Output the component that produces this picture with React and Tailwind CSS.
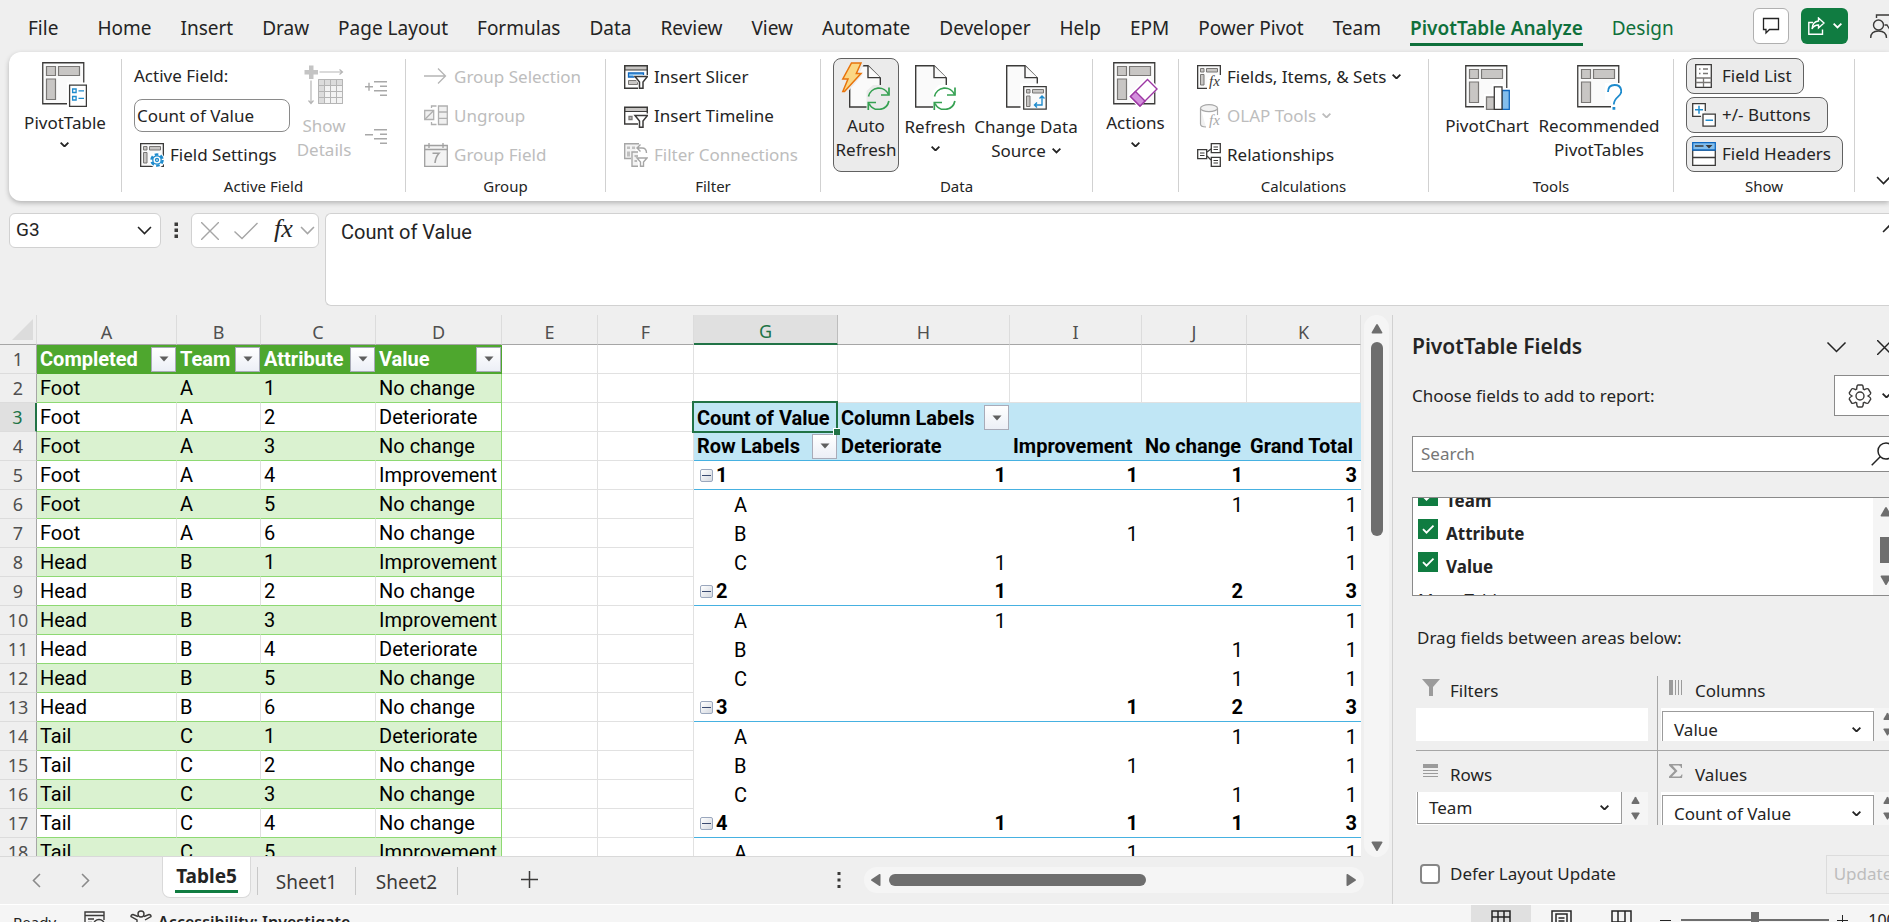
import { useState } from 'react';

const tabs = [
  'File', 'Home', 'Insert', 'Draw', 'Page Layout', 'Formulas', 'Data', 'Review', 'View', 'Automate',
  'Developer', 'Help', 'EPM', 'Power Pivot', 'Team', 'PivotTable Analyze', 'Design',
];

const columns = [
  { name: 'A', width: 140 },
  { name: 'B', width: 84 },
  { name: 'C', width: 115 },
  { name: 'D', width: 126 },
  { name: 'E', width: 96 },
  { name: 'F', width: 96 },
  { name: 'G', width: 144 },
  { name: 'H', width: 172 },
  { name: 'I', width: 132 },
  { name: 'J', width: 105 },
  { name: 'K', width: 114 },
];

const records = [
  ['Foot', 'A', '1', 'No change'],
  ['Foot', 'A', '2', 'Deteriorate'],
  ['Foot', 'A', '3', 'No change'],
  ['Foot', 'A', '4', 'Improvement'],
  ['Foot', 'A', '5', 'No change'],
  ['Foot', 'A', '6', 'No change'],
  ['Head', 'B', '1', 'Improvement'],
  ['Head', 'B', '2', 'No change'],
  ['Head', 'B', '3', 'Improvement'],
  ['Head', 'B', '4', 'Deteriorate'],
  ['Head', 'B', '5', 'No change'],
  ['Head', 'B', '6', 'No change'],
  ['Tail', 'C', '1', 'Deteriorate'],
  ['Tail', 'C', '2', 'No change'],
  ['Tail', 'C', '3', 'No change'],
  ['Tail', 'C', '4', 'No change'],
  ['Tail', 'C', '5', 'Improvement'],
];

// Pivot body, starting on sheet row 5
const pivotRows = [
  ['1', '1', '1', '1', '3'],
  ['A', '', '', '1', '1'],
  ['B', '', '1', '', '1'],
  ['C', '1', '', '', '1'],
  ['2', '1', '', '2', '3'],
  ['A', '1', '', '', '1'],
  ['B', '', '', '1', '1'],
  ['C', '', '', '1', '1'],
  ['3', '', '1', '2', '3'],
  ['A', '', '', '1', '1'],
  ['B', '', '1', '', '1'],
  ['C', '', '', '1', '1'],
  ['4', '1', '1', '1', '3'],
  ['A', '', '1', '', '1'],
];

const Chevron = ({ size = 9, stroke = 1.8, className = '' }) => (
  <svg width={size} height={size * 0.6} viewBox="0 0 10 6" className={className} fill="none" stroke="currentColor" strokeWidth={(stroke * 10) / size}>
    <path d="M.7 .7 5 5 9.3 .7" />
  </svg>
);

const Triangle = ({ dir = 'up', className = '' }) => {
  const paths = {
    up: 'M5.2 1.5Q6 .5 6.8 1.5L11.4 9.4Q11.6 10.5 10.5 10.5H1.5Q.4 10.5 .6 9.4Z',
    down: 'M5.2 9.5Q6 10.5 6.8 9.5L11.4 1.6Q11.6 .5 10.5 .5H1.5Q.4 .5 .6 1.6Z',
    left: 'M1.5 5.2Q.5 6 1.5 6.8L9.4 12Q10.5 12.2 10.5 11V1Q10.5 -.2 9.4 0Z',
    right: 'M9.5 5.2Q10.5 6 9.5 6.8L1.6 12Q.5 12.2 .5 11V1Q.5 -.2 1.6 0Z',
  };
  return (
    <svg width="12" height="12" viewBox="0 0 12 12" className={className} fill="#6e6e6e">
      <path d={paths[dir]} />
    </svg>
  );
};

/* Ribbon icons */

const PivotBase = () => (
  <g>
    <path d="M.75 .75h41v41h-41z" fill="#fafafa" stroke="#3b3a39" strokeWidth="1.3" />
    <path d="M4.5 4.5h9v9h-9zM16.5 4.5h21v9h-21zM4.5 17h9v20.5h-9z" fill="#c8c6c4" stroke="#797775" strokeWidth="1.2" />
  </g>
);

const PivotTableIcon = () => (
  <svg width="45" height="45" viewBox="0 0 45 45" fill="none">
    <PivotBase />
    <path d="M25 20.5h20V45H25z" fill="#fff" />
    <path d="M27.6 23.1h16.8v21.3H27.6z" fill="#fff" stroke="#3b3a39" strokeWidth="1.3" />
    <path d="M30.6 27h3.5v3.5h-3.5zM30.6 34.5h3.5V38h-3.5zM36.5 28.8H42M36.5 36.3H42" stroke="#1e8bcd" strokeWidth="1.3" />
  </svg>
);

const ActionsIcon = () => (
  <svg width="45" height="45" viewBox="0 0 45 45" fill="none">
    <PivotBase />
    <path d="M14.5 34 34.5 14 46 26 26 46z" fill="#fff" />
    <path d="M17.5 34.5 34.5 17.5 44 27 27 44z" fill="#fff" stroke="#9c36a3" strokeWidth="1.4" />
    <path d="M17.5 34.5 22.5 29.5 32 39 27 44z" fill="#d38fdc" stroke="#9c36a3" strokeWidth="1.4" />
  </svg>
);

const PivotChartIcon = () => (
  <svg width="45" height="45" viewBox="0 0 45 45" fill="none">
    <PivotBase />
    <path d="M19 29h8V19h12v4h6v22H19z" fill="#fff" />
    <path d="M21.5 32h8v12.3h-8z" fill="#c8c6c4" stroke="#797775" strokeWidth="1.3" />
    <path d="M37 25.5h7.3v18.8H37z" fill="#83beec" stroke="#1068bf" strokeWidth="1.3" />
    <path d="M29.3 21.8H37v22.5h-7.7z" fill="#fff" stroke="#3b3a39" strokeWidth="1.3" />
  </svg>
);

const RecommendedIcon = () => (
  <svg width="45" height="45" viewBox="0 0 45 45" fill="none">
    <PivotBase />
    <path d="M28 18h17v27H34V35h-6z" fill="#fff" />
    <path d="M31 27Q31 20 37.6 20T44.3 26.5C44.3 31.5 36.8 32 36.8 39.5" stroke="#1e8bcd" strokeWidth="1.8" />
    <path d="M35.5 42h2.8v2.8h-2.8z" fill="#1e8bcd" />
  </svg>
);

const DocShape = () => (
  <g stroke="#3b3a39" strokeWidth="1.4" fill="#fafafa">
    <path d="M.7 .7H19L31.3 13V42H.7z" />
    <path d="M19 .7V12.6H31.3" />
  </g>
);

const RefreshArrows = () => (
  <g stroke="#36a152" strokeWidth="1.7">
    <path d="M19.5 31.5A10.6 10.6 0 0 1 39.6 29.6M39.9 36A10.6 10.6 0 0 1 20 38.5" />
    <path d="M40 22.5V30H32M19.3 45V37.5H27" />
  </g>
);

const RefreshIcon = () => (
  <svg width="41" height="45" viewBox="0 0 41 45" fill="none">
    <DocShape />
    <path d="M18 45V26L24 20H41V45z" fill="#fff" />
    <RefreshArrows />
  </svg>
);

const AutoRefreshIcon = () => (
  <svg width="50" height="48" viewBox="0 0 50 48" fill="none">
    <g transform="translate(8 3)">
      <DocShape />
      <path d="M17.5 45V26L24 20H42V45z" fill="#ebebeb" />
      <RefreshArrows />
    </g>
    <path d="M7 0H24L18 12H22L4 33H0V18z" fill="#ebebeb" />
    <path d="M10.5 1H20L15.3 11.5H20L3.5 29.5H1.8L7 17H1.8z" fill="#fbd784" stroke="#e8740c" strokeWidth="1.5" />
  </svg>
);

const ChangeSourceIcon = () => (
  <svg width="41" height="45" viewBox="0 0 41 45" fill="none">
    <DocShape />
    <path d="M14.5 18.5H41V45H14.5z" fill="#fff" />
    <path d="M17.7 21.7h22.5v22.5H17.7z" fill="#fafafa" stroke="#3b3a39" strokeWidth="1.3" />
    <path d="M20.5 24.5h3.5v3.5h-3.5zM26.5 24.5h11v3.5h-11zM20.5 31h3.5v10.5h-3.5z" fill="#c8c6c4" stroke="#797775" />
    <path d="M36 31V40H28.5M33.5 33.5 36 31 38.5 33.5M31 37.5 28.5 40 31 42.5" stroke="#1e8bcd" strokeWidth="1.4" />
  </svg>
);

const ShowDetailsIcon = () => (
  <svg width="40" height="40" viewBox="0 0 40 40" fill="none" stroke="#b5b5b5">
    <path d="M5 .5h4.5V5H14v4.5H9.5V14H5V9.5H.5V5H5z" fill="#c4c4c4" stroke="none" />
    <path d="M15.5 7H38M35.5 4.5 38.5 7 35.5 9.5M7 15.5V38M4.5 35.5 7 38.5 9.5 35.5" strokeWidth="1.2" />
    <path d="M14.5 14.5h24v24h-24z" fill="#f3f3f3" />
    <path d="M14.5 14.5h24v6h-24zM14.5 20h6v18.5h-6z" fill="#dcdcdc" stroke="none" />
    <path d="M14.5 14.5h24v24h-24zM20.5 14.5v24M26.5 14.5v24M32.5 14.5v24M14.5 20.5h24M14.5 26.5h24M14.5 32.5h24" />
  </svg>
);

const IndentIcon = ({ minus }) => (
  <svg width="22" height="18" viewBox="0 0 22 18" fill="none" stroke="#a8a8a8" strokeWidth="1.4">
    <path d="M9 1.7H22M15 6.2H22M9 10.7H22M15 15.2H22M0 6.7H8" />
    {!minus && <path d="M4 2.7V10.7" />}
  </svg>
);

const SmallPivot = () => (
  <g>
    <path d="M.65 .65h22.7v22.7H.65z" fill="#fafafa" stroke="#3b3a39" strokeWidth="1.3" />
    <path d="M3.5 3.5h3.5V7H3.5zM9.5 3.5h11V7h-11zM3.5 9.5h3.5v10.5H3.5z" fill="#c8c6c4" stroke="#797775" />
  </g>
);

const FieldSettingsIcon = () => (
  <svg width="24" height="24" viewBox="0 0 24 24" fill="none">
    <SmallPivot />
    <circle cx="17" cy="17" r="7.8" fill="#fff" />
    <circle cx="17" cy="17" r="5.6" stroke="#1e8bcd" strokeWidth="2.4" strokeDasharray="3.6 2.26" />
    <circle cx="17" cy="17" r="4.2" stroke="#1e8bcd" strokeWidth="1.3" fill="#fff" />
    <circle cx="17" cy="17" r="1.5" stroke="#1e8bcd" strokeWidth="1.3" />
  </svg>
);

const FieldsItemsIcon = () => (
  <svg width="24" height="24" viewBox="0 0 24 24" fill="none">
    <SmallPivot />
    <path d="M10 24V14L14 10H24V24z" fill="#fff" />
    <text x="12" y="21" fontFamily="Liberation Serif" fontStyle="italic" fontSize="15" fill="#3b3a39">fx</text>
  </svg>
);

const OlapIcon = () => (
  <svg width="24" height="24" viewBox="0 0 24 24" fill="none" stroke="#a8a8a8" strokeWidth="1.2">
    <path d="M3.500 4V20C3.5 22 6 23 9 23M20.5 4V11" fill="#f2f2f2" />
    <ellipse cx="12" cy="4.2" rx="8.5" ry="3.5" fill="#f2f2f2" />
    <text x="12" y="21" fontFamily="Liberation Serif" fontStyle="italic" fontSize="15" fill="#a8a8a8" stroke="none">fx</text>
  </svg>
);

const RelationshipsIcon = () => (
  <svg width="24" height="24" viewBox="0 0 24 24" fill="none" stroke="#3b3a39" strokeWidth="1.3">
    <path d="M10 9 14 6M10 13 14 17" />
    <path d="M.7 6.7h9v9h-9zM14.3 .7h9v9h-9zM14.3 14.3h9v9h-9z" fill="#fff" />
    <path d="M3 10h4.5M3 12.5h4.5M16.5 4h4.5M16.5 6.5h4.5M16.5 17.5h4.5M16.5 20h4.5" strokeWidth="1" />
  </svg>
);

const ArrowRightIcon = () => (
  <svg width="24" height="24" viewBox="0 0 24 24" fill="none" stroke="#b5b5b5" strokeWidth="1.3">
    <path d="M0 11H21.5M14 3.5 21.5 11 14 18.5" />
  </svg>
);

const UngroupIcon = () => (
  <svg width="24" height="24" viewBox="0 0 24 24" fill="none" stroke="#b0b0b0" strokeWidth="1.3">
    <path d="M.7 6.5h9v9h-9z" fill="#f0f0f0" />
    <path d="M.7 15.5 9.7 6.5M12.5 2H7.5V4M12.5 20.5H7.5V18" />
    <path d="M14.5 2h8.8v18.5h-8.8z" fill="#f0f0f0" />
    <path d="M14.5 8h8.8M14.5 14.3h8.8" />
  </svg>
);

const CalendarIcon = () => (
  <svg width="24" height="24" viewBox="0 0 24 24" fill="none" stroke="#a0a0a0" strokeWidth="1.3">
    <path d="M.7 2.5h22.6v20.8H.7z" fill="#f3f3f3" />
    <path d="M.7 6.5h22.6M5 0V5M19 0V5" />
    <path d="M8.5 10.2H15Q11.5 14 11 20" strokeWidth="1.6" />
  </svg>
);

const Funnel = ({ stroke }) => (
  <path d="M11 11.5H23.5L19 17V23.3H15.5V17z" fill="#fff" stroke={stroke} strokeWidth="1.5" />
);

const SlicerIcon = () => (
  <svg width="24" height="24" viewBox="0 0 24 24" fill="none">
    <path d="M.7 .7h22.6v22.6H.7z" fill="#fff" stroke="#3b3a39" strokeWidth="1.4" />
    <path d="M1 1h22v4H1z" fill="#c8c6c4" stroke="#3b3a39" />
    <path d="M4.5 8h15v4h-15z" fill="#83beec" stroke="#1068bf" strokeWidth="1.3" />
    <path d="M4.5 15.5h9v4h-9z" fill="#c8c6c4" stroke="#797775" />
    <path d="M9 10H24V24H14V18z" fill="#fff" />
    <Funnel stroke="#3b3a39" />
  </svg>
);

const TimelineIcon = () => (
  <svg width="24" height="24" viewBox="0 0 24 24" fill="none">
    <path d="M.7 3.2h22.6V20H.7z" fill="#fff" stroke="#3b3a39" strokeWidth="1.4" />
    <path d="M1 3.5h22v4H1z" fill="#c8c6c4" stroke="#3b3a39" />
    <path d="M5 12.5h3v3H5z" fill="#c8c6c4" stroke="#797775" strokeWidth="1.3" />
    <path d="M9 9.5H24V24H14V17z" fill="#fff" />
    <Funnel stroke="#3b3a39" />
  </svg>
);

const FilterConnectionsIcon = () => (
  <svg width="24" height="24" viewBox="0 0 24 24" fill="none" stroke="#a6a6a6" strokeWidth="1.4">
    <path d="M7 15.5H.7V.7H15" fill="#f3f3f3" />
    <path d="M3 3.5h3v2.5H3zM8 3.5h3v2.5H8zM3 8.5h3v5H3z" fill="#c0c0c0" stroke="none" />
    <path d="M16.5 1.500 13 5 16.5 8.5M13 5H18Q22.500 5 22.5 10" />
    <path d="M14 23.3H8V9h6M10.5 13H14M10.5 18H13" fill="#f3f3f3" />
    <path d="M13 15h10l-3.5 4v4.3h-3V19z" fill="#fff" />
  </svg>
);

const FieldListIcon = () => (
  <svg width="24" height="24" viewBox="0 0 24 24" fill="none" stroke="#3b3a39" strokeWidth="1.3">
    <path d="M3.700 .7h15.6v22.6H3.7z" fill="#fff" />
    <path d="M7 5h1.5M11 5h5M7 9.5h1.5M11 9.5h5M3.7 14h15.6M3.7 18.5h15.6M11.5 14v9" stroke="#797775" />
  </svg>
);

const PlusMinusIcon = () => (
  <svg width="24" height="24" viewBox="0 0 24 24" fill="none" stroke="#3b3a39" strokeWidth="1.3">
    <path d="M9 13.3H.7V.7h12.6V8" fill="#fff" />
    <path d="M11 11.2h12.3v12H11z" fill="#fff" />
    <path d="M3 6.8h8M7 2.8v8M13.5 17.2h7.5" stroke="#1e8bcd" strokeWidth="1.5" />
  </svg>
);

const FieldHeadersIcon = () => (
  <svg width="24" height="24" viewBox="0 0 24 24" fill="none" stroke="#3b3a39" strokeWidth="1.3">
    <path d="M.7 8h22.6v15.3H.7zM.7 15.5h22.6" fill="#fff" />
    <path d="M.7 .7h22.6V8H.7z" fill="#83beec" stroke="#1068bf" />
    <path d="M3 4h8.5" />
    <path d="M13.5 3h7L17 6.5z" fill="#3b3a39" stroke="none" />
  </svg>
);

/* Ribbon building blocks */

const RibbonGroup = ({ label, className, children }) => (
  <>
    <section className={`flex shrink-0 flex-col pt-[5px] ${className}`}>
      <div className="flex h-[117px]">{children}</div>
      {label && <h2 className="h-6 text-center text-[15px] leading-6">{label}</h2>}
    </section>
    <span className="mt-[7px] mb-[9px] w-px shrink-0 bg-[#d1d1d1]" />
  </>
);

const BigButton = ({ icon, lines, chevron, className = '', disabled }) => (
  <button
    type="button"
    disabled={disabled}
    className={`mt-px flex h-[114px] shrink-0 flex-col items-center gap-1 whitespace-nowrap rounded-lg text-[17px] leading-6 disabled:text-[#bdbdbd] ${className}`}
  >
    {icon}
    <span className="flex flex-col items-center">
      {lines.map((line, i) => (
        <span key={line} className="flex items-center gap-1.5">
          {line}
          {chevron === 'inline' && i === lines.length - 1 && <Chevron />}
        </span>
      ))}
      {chevron === 'below' && <Chevron className="mt-[7px]" />}
    </span>
  </button>
);

const SmallButton = ({ icon, text, chevron, disabled }) => (
  <button
    type="button"
    disabled={disabled}
    className="flex h-[39px] items-center gap-1.5 whitespace-nowrap text-[17px] disabled:text-[#bdbdbd]"
  >
    {icon}
    <span>{text}</span>
    {chevron && <Chevron />}
  </button>
);

const ToggleButton = ({ icon, text, className }) => (
  <button
    type="button"
    aria-pressed="true"
    className={`flex h-9 items-center gap-1.5 whitespace-nowrap rounded-lg border border-[#616161] bg-[#ebebeb] pl-[5px] text-[17px] ${className}`}
  >
    {icon}
    {text}
  </button>
);

const TabBar = () => (
  <header className="flex h-[52px] items-start justify-between overflow-hidden pl-7">
    <nav className="flex shrink-0 gap-[29px] pt-[10px]">
      {tabs.map((tab) => {
        const active = tab === 'PivotTable Analyze';
        const green = active || tab === 'Design';
        return (
          <button
            key={tab}
            type="button"
            className={`h-9 whitespace-nowrap border-b-[3px] text-[19px] leading-9 ${active ? 'border-[#0f703b] font-semibold' : 'border-transparent'} ${green ? 'text-[#0f703b]' : ''} ${tab === 'File' ? 'mr-[10px]' : ''}`}
          >
            {tab}
          </button>
        );
      })}
    </nav>
    <div className="-mr-3 flex shrink-0 items-center gap-3 pt-2">
      <button type="button" aria-label="Comments" className="flex size-9 items-center justify-center rounded-md border border-[#b0b0b0] bg-white">
        <svg width="18" height="18" viewBox="0 0 18 18" fill="none" stroke="#242424" strokeWidth="1.3">
          <path d="M1.5 1.5h15v11H7.5L4 16V12.5H1.5z" />
        </svg>
      </button>
      <button type="button" aria-label="Share" className="flex h-9 w-[47px] items-center justify-center gap-2 rounded-md bg-[#107c41] text-white">
        <svg width="17" height="18" viewBox="0 0 17 18" fill="none" stroke="currentColor" strokeWidth="1.4">
          <path d="M5 5.5H.8V17.2H14.5V12.5" />
          <path d="M10.5 1 16 6 10.5 11V8Q6 8 4 12Q4.5 4.5 10.5 4z" />
        </svg>
        <Chevron />
      </button>
      <button type="button" aria-label="Account" className="shrink-0 pl-2.5">
        <svg width="31" height="25" viewBox="0 0 31 25" fill="none" stroke="#3b3a39" strokeWidth="1.4">
          <path d="M6.5 4V1H30V16H24L20 20V16" />
          <circle cx="8.5" cy="11" r="5" />
          <path d="M.7 24Q.7 17 8.5 17T16.5 24M14.5 11H17L19.5 15" />
        </svg>
      </button>
    </div>
  </header>
);

const Ribbon = () => (
  <div className="ml-[9px] flex h-[149px] overflow-hidden rounded-l-xl bg-white shadow-[0_2px_5px_rgba(0,0,0,0.25)]">
    <RibbonGroup className="w-[112px] items-center">
      <BigButton icon={<PivotTableIcon />} lines={['PivotTable']} chevron="below" className="pt-1" />
    </RibbonGroup>
    <RibbonGroup label="Active Field" className="w-[283px]">
      <div className="ml-3 flex w-[156px] flex-col">
        <label htmlFor="activeField" className="h-[39px] text-[17px] leading-[38px]">Active Field:</label>
        <div className="flex h-[39px] items-center">
          <input
            id="activeField"
            defaultValue="Count of Value"
            className="h-[33px] w-full rounded-lg border border-[#8a8a8a] bg-white px-0.5 text-[17px] outline-none"
          />
        </div>
        <div className="pl-1.5">
          <SmallButton icon={<FieldSettingsIcon />} text="Field Settings" />
        </div>
      </div>
      <BigButton disabled icon={<ShowDetailsIcon />} lines={['Show', 'Details']} className="ml-2 w-[52px] gap-[9px] pt-[7px]" />
      <div className="flex flex-col gap-[30px] pt-[23px] pl-[15px]">
        <button type="button" disabled aria-label="Expand Field"><IndentIcon /></button>
        <button type="button" disabled aria-label="Collapse Field"><IndentIcon minus /></button>
      </div>
    </RibbonGroup>
    <RibbonGroup label="Group" className="w-[199px]">
      <div className="pl-[18px]">
        <SmallButton disabled icon={<ArrowRightIcon />} text="Group Selection" />
        <SmallButton disabled icon={<UngroupIcon />} text="Ungroup" />
        <SmallButton disabled icon={<CalendarIcon />} text="Group Field" />
      </div>
    </RibbonGroup>
    <RibbonGroup label="Filter" className="w-[214px]">
      <div className="pl-[18px]">
        <SmallButton icon={<SlicerIcon />} text="Insert Slicer" />
        <SmallButton icon={<TimelineIcon />} text="Insert Timeline" />
        <SmallButton disabled icon={<FilterConnectionsIcon />} text="Filter Connections" />
      </div>
    </RibbonGroup>
    <RibbonGroup label="Data" className="w-[271px]">
      <BigButton icon={<AutoRefreshIcon />} lines={['Auto', 'Refresh']} className="ml-3 w-[66px] border border-[#616161] bg-[#ebebeb] pt-[3px]" />
      <BigButton icon={<RefreshIcon />} lines={['Refresh']} chevron="below" className="w-[72px] gap-[5px] pt-[7px]" />
      <BigButton icon={<ChangeSourceIcon />} lines={['Change Data', 'Source']} chevron="inline" className="w-[110px] gap-[5px] pt-[7px]" />
    </RibbonGroup>
    <RibbonGroup className="w-[85px]">
      <BigButton icon={<ActionsIcon />} lines={['Actions']} chevron="below" className="w-full pt-1" />
    </RibbonGroup>
    <RibbonGroup label="Calculations" className="w-[249px]">
      <div className="pl-[18px]">
        <SmallButton icon={<FieldsItemsIcon />} text="Fields, Items, &amp; Sets" chevron />
        <SmallButton disabled icon={<OlapIcon />} text="OLAP Tools" chevron />
        <SmallButton icon={<RelationshipsIcon />} text="Relationships" />
      </div>
    </RibbonGroup>
    <RibbonGroup label="Tools" className="w-[244px]">
      <BigButton icon={<PivotChartIcon />} lines={['PivotChart']} className="ml-4 w-[84px] pt-[7px]" />
      <BigButton icon={<RecommendedIcon />} lines={['Recommended', 'PivotTables']} className="ml-2.5 w-[120px] pt-[7px]" />
    </RibbonGroup>
    <RibbonGroup label="Show" className="w-[180px]">
      <div className="flex flex-col gap-[3px] pt-px pl-3">
        <ToggleButton icon={<FieldListIcon />} text="Field List" className="w-[118px]" />
        <ToggleButton icon={<PlusMinusIcon />} text="+/- Buttons" className="w-[142px]" />
        <ToggleButton icon={<FieldHeadersIcon />} text="Field Headers" className="w-[157px]" />
      </div>
    </RibbonGroup>
    <button type="button" aria-label="Collapse ribbon" className="shrink-0 self-end pb-4 pl-[21px]">
      <Chevron size={15} stroke={1.6} />
    </button>
  </div>
);

const FormulaBar = () => (
  <div className="flex h-[114px] shrink-0 items-start pt-3 pl-[9px] font-['Roboto','Noto_Sans',sans-serif]">
    <div className="flex h-[35px] w-[152px] shrink-0 items-center rounded-md border border-[#d1d1d1] bg-white pr-2">
      <input aria-label="Name Box" defaultValue="G3" className="min-w-0 flex-1 pl-1.5 text-[19px] outline-none" />
      <button type="button" aria-label="Open name list"><Chevron size={15} stroke={1.6} /></button>
    </div>
    <svg width="30" height="35" viewBox="0 0 30 35" fill="#3b3a39" className="shrink-0">
      <path d="M13.5 9.500h3.500v3.500h-3.500zM13.5 15.5h3.5v3.5h-3.5zM13.5 21.5h3.5v3.5h-3.5z" />
    </svg>
    <div className="flex h-[35px] w-[128px] shrink-0 items-center rounded-md border border-[#d1d1d1] bg-white pr-[3px] pl-[9px] text-[#a6a6a6]">
      <button type="button" aria-label="Cancel">
        <svg width="18" height="18" viewBox="0 0 18 18" fill="none" stroke="currentColor" strokeWidth="1.4"><path d="M0 0 18 18M18 0 0 18" /></svg>
      </button>
      <button type="button" aria-label="Enter" className="ml-[15px]">
        <svg width="24" height="18" viewBox="0 0 24 18" fill="none" stroke="currentColor" strokeWidth="1.4"><path d="M.5 9.5 8 16.5 23.500 1" /></svg>
      </button>
      <button type="button" className="ml-4 pb-1 font-['Liberation_Serif',serif] text-[26px] leading-7 text-[#242424] italic">fx</button>
      <button type="button" aria-label="Function list" className="ml-auto"><Chevron size={15} stroke={1.6} /></button>
    </div>
    <div className="ml-1.5 flex h-[93px] min-w-0 flex-1 rounded-l-md border border-r-0 border-[#d1d1d1] bg-white">
      <textarea
        aria-label="Formula bar"
        defaultValue="Count of Value"
        className="flex-1 resize-none pt-1 pl-[15px] text-[20px] leading-7 outline-none"
      />
      <button type="button" aria-label="Collapse formula bar" className="-mr-2 self-start pt-2.5">
        <Chevron size={15} stroke={1.6} className="rotate-180" />
      </button>
    </div>
  </div>
);

/* Worksheet */

const FilterButton = ({ name }) => (
  <button
    type="button"
    aria-label={`Filter ${name}`}
    className="mr-px flex size-[25px] shrink-0 items-center justify-center border border-[#a9abb8] bg-linear-to-b from-white to-[#eceff6]"
  >
    <svg width="10" height="6" viewBox="0 0 10 6" fill="#5f5f5f"><path d="M.5 .5h9L5 5.5z" /></svg>
  </button>
);

const LabelCell = ({ text }) => (
  <div className="flex items-center justify-between">
    {text}
    <FilterButton name={text} />
  </div>
);

const TableCells = ({ row }) => {
  if (row === 1) {
    return ['Completed', 'Team', 'Attribute', 'Value'].map((name) => (
      <td key={name} className="border-b border-[#4ea72e] bg-[#4ea72e] pl-[3px] font-bold text-white">
        <LabelCell text={name} />
      </td>
    ));
  }
  const banded = row % 2 === 0;
  return records[row - 2].map((value, i) => (
    <td
      key={i}
      className={`border-r border-b border-b-[#8ed973] pl-[3px] ${i === 3 ? 'border-r-[#8ed973]' : banded ? 'border-r-[#daf2d0]' : 'border-r-[#e1e1e1]'} ${banded ? 'bg-[#daf2d0]' : ''}`}
    >
      {value}
    </td>
  ));
};

const PivotCells = ({ row }) => {
  if (row < 3) {
    return [0, 1, 2, 3, 4].map((i) => <td key={i} className="border-r border-b border-[#e1e1e1]" />);
  }
  if (row === 3) {
    return (
      <>
        <td className="relative bg-[#c0e6f5] pl-[3px] font-bold">
          Count of Value
          <span className="absolute -top-0.5 right-0 -bottom-px -left-0.5 border-2 border-[#217346]" />
          <span className="absolute -right-0.5 -bottom-[3px] size-[7px] border-t border-l border-white bg-[#217346]" />
        </td>
        <td className="bg-[#c0e6f5] pl-[3px] font-bold"><LabelCell text="Column Labels" /></td>
        <td colSpan={3} className="bg-[#c0e6f5]" />
      </>
    );
  }
  if (row === 4) {
    return (
      <>
        <td className="border-b border-[#46b1e1] bg-[#c0e6f5] pl-[3px] font-bold"><LabelCell text="Row Labels" /></td>
        {['Deteriorate', 'Improvement', 'No change', 'Grand Total'].map((name) => (
          <td key={name} className="border-b border-[#46b1e1] bg-[#c0e6f5] pl-[3px] font-bold">{name}</td>
        ))}
      </>
    );
  }
  const [label, ...counts] = pivotRows[row - 5];
  const isGroup = !Number.isNaN(Number(label));
  return (
    <>
      <td className={isGroup ? 'border-b border-[#46b1e1] pl-1.5 font-bold' : 'pl-10'}>
        {isGroup ? (
          <span className="flex items-center gap-[3px]">
            <button
              type="button"
              aria-label={`Collapse ${label}`}
              className="flex size-[13px] items-center justify-center rounded-xs border border-[#9aa7bd] bg-linear-to-br from-white to-[#d5d9e0]"
            >
              <span className="h-px w-[9px] bg-[#3a4a70]" />
            </button>
            {label}
          </span>
        ) : label}
      </td>
      {counts.map((count, i) => (
        <td key={i} className={`pr-1 text-right ${isGroup ? 'border-b border-[#46b1e1] font-bold' : ''}`}>{count}</td>
      ))}
    </>
  );
};

const Sheet = () => (
  <div className="relative min-h-0 flex-1 overflow-hidden border-b border-[#d9d9d9]">
    <table className="w-[1361px] table-fixed border-separate border-spacing-0 bg-white font-['Roboto','Noto_Sans',sans-serif] text-[20px] leading-6 whitespace-nowrap text-black">
      <colgroup>
        <col style={{ width: 37 }} />
        {columns.map((col) => <col key={col.name} style={{ width: col.width }} />)}
      </colgroup>
      <thead>
        <tr className="h-[29px] bg-[#efefef] font-['Noto_Sans',sans-serif] text-[18px] text-[#505050]">
          <th className="border-r border-b border-r-[#dcdcdc] border-b-[#a6a6a6]">
            <svg width="22" height="22" viewBox="0 0 22 22" fill="#dcdcdc" className="ml-3"><path d="M21 0V21H0z" /></svg>
          </th>
          {columns.map((col) => (
            <th
              key={col.name}
              className={`border-r pt-1 font-normal ${col.name === 'G' ? 'border-b-2 border-r-[#bdbdbd] border-b-[#217346] bg-[#e0e0e0] text-[#217346]' : 'border-b border-r-[#dcdcdc] border-b-[#a6a6a6]'}`}
            >
              {col.name}
            </th>
          ))}
        </tr>
      </thead>
      <tbody>
        {Array.from({ length: 18 }, (_, i) => i + 1).map((row) => (
          <tr key={row} className="h-[29px]">
            <th
              className={`border-b border-b-[#dcdcdc] font-['Noto_Sans',sans-serif] text-[18px] font-normal ${row === 3 ? 'border-r-2 border-r-[#217346] bg-[#e0e0e0] text-[#217346]' : 'border-r border-r-[#a6a6a6] bg-[#efefef] text-[#505050]'}`}
            >
              {row}
            </th>
            <TableCells row={row} />
            <td className="border-r border-b border-[#e1e1e1]" />
            <td className="border-r border-b border-[#e1e1e1]" />
            <PivotCells row={row} />
          </tr>
        ))}
      </tbody>
    </table>
  </div>
);

const SheetTabs = () => (
  <div className="flex h-[47px] shrink-0 items-center text-[#3b3a39]">
    <button type="button" aria-label="Previous sheet" className="ml-[29px] text-[#8a8a8a]"><Chevron size={15} stroke={1.6} className="rotate-90" /></button>
    <button type="button" aria-label="Next sheet" className="ml-[34px] text-[#8a8a8a]"><Chevron size={15} stroke={1.6} className="-rotate-90" /></button>
    <button type="button" className="-mt-px ml-[69px] h-[42px] w-[89px] self-start rounded-b-lg border border-t-0 border-[#d9d9d9] bg-white px-3 text-[19px] font-bold text-[#242424]">
      <span className="block border-b-[3px] border-[#107c41] pt-0.5 leading-7">Table5</span>
    </button>
    <button type="button" className="ml-1.5 h-7 w-[99px] border-x border-[#c8c8c8] text-[19px] leading-[30px]">Sheet1</button>
    <button type="button" className="h-7 w-[102px] border-r border-[#c8c8c8] text-[19px] leading-[30px]">Sheet2</button>
    <button type="button" aria-label="New sheet" className="ml-[63px] pb-0.5">
      <svg width="17" height="17" viewBox="0 0 17 17" fill="none" stroke="currentColor" strokeWidth="1.5"><path d="M8.5 0V17M0 8.5H17" /></svg>
    </button>
    <svg width="4" height="18" viewBox="0 0 4 18" fill="#3b3a39" className="ml-auto"><path d="M.5 0h3v3h-3zM.5 6.5h3v3h-3zM.5 13h3v3h-3z" /></svg>
    <div className="mr-7 mb-0.5 ml-[23px] flex h-[26px] w-[500px] items-center rounded-full bg-[#f5f5f5] px-1.5">
      <Triangle dir="left" />
      <span className="ml-[7px] h-3 w-[257px] rounded-full bg-[#6e6e6e]" />
      <Triangle dir="right" className="ml-auto" />
    </div>
  </div>
);

const VerticalScrollbar = () => (
  <div className="mx-[3px] flex w-[25px] shrink-0 flex-col items-center rounded-full bg-[#f5f5f5] pt-2 pb-1">
    <Triangle dir="up" />
    <span className="mt-[7px] h-[194px] w-3 rounded-full bg-[#6e6e6e]" />
    <Triangle dir="down" className="mt-auto" />
  </div>
);

/* PivotTable Fields pane */

const FieldCheckbox = ({ name }) => {
  const [checked, setChecked] = useState(true);
  return (
    <li className="flex h-[33px] items-start">
      <span className="mt-0.5 grid size-5 shrink-0">
        <input
          id={`field-${name}`}
          type="checkbox"
          checked={checked}
          onChange={(e) => setChecked(e.target.checked)}
          className="size-5 appearance-none border border-[#107c41] bg-white [grid-area:1/1] checked:bg-[#107c41]"
        />
        <svg viewBox="0 0 20 20" fill="none" stroke="#fff" strokeWidth="1.8" className="pointer-events-none size-5 [grid-area:1/1]">
          <path d="M5 10.2 8.5 13.7 15.5 6.7" />
        </svg>
      </span>
      <label htmlFor={`field-${name}`} className="pl-2 text-[17px] leading-[33px] font-bold">{name}</label>
    </li>
  );
};

const Spinner = () => (
  <span className="flex h-[33px] w-[26px] flex-col items-center justify-between bg-[#f5f5f5] py-1">
    <Triangle dir="up" className="size-[9px]" />
    <Triangle dir="down" className="size-[9px]" />
  </span>
);

const AreaTitle = ({ icon, text }) => (
  <h3 className="flex h-8 items-center gap-2.5 pl-1.5 text-[17px] leading-[30px]">
    <svg width="18" height="18" viewBox="0 0 18 18" fill="#9b9b9b" className="mb-2">{icon}</svg>
    <span className="h-8">{text}</span>
  </h3>
);

const AreaField = ({ text, scrolled }) => (
  <div className="flex h-[33px] items-start overflow-hidden bg-white">
    <button
      type="button"
      className={`ml-px flex flex-1 items-center justify-between border border-[#9b9b9b] pr-3 pl-[11px] text-[17px] ${scrolled ? 'h-8 border-t-0' : 'mt-[3px] h-[37px]'}`}
    >
      {text}
      <Chevron />
    </button>
    <Spinner />
  </div>
);

const FieldsPane = () => (
  <aside className="w-[497px] shrink-0 overflow-hidden border-l border-[#d1d1d1] pt-4 pl-[19px]">
    <div className="w-[488px]">
      <div className="flex h-8 items-center">
        <h2 className="flex-1 text-[21px] font-semibold">PivotTable Fields</h2>
        <button type="button" aria-label="Pane options"><Chevron size={21} stroke={1.5} /></button>
        <button type="button" aria-label="Close" className="mr-2 ml-[30px]">
          <svg width="15" height="15" viewBox="0 0 15 15" fill="none" stroke="currentColor" strokeWidth="1.5"><path d="M0 0 15 15M15 0 0 15" /></svg>
        </button>
      </div>
      <div className="mt-3 flex h-[41px] items-center justify-between">
        <p className="text-[17px]">Choose fields to add to report:</p>
        <button type="button" aria-label="Tools" className="flex h-[41px] w-[66px] items-center gap-2.5 border border-[#8a8a8a] bg-white pl-[13px]">
          <svg width="24" height="24" viewBox="0 0 24 24" fill="none" stroke="#3b3a39" strokeWidth="1.4">
            <circle cx="12" cy="12" r="4" />
            <path d="M8.7 5Q8.7 1.2 10 1H14Q15.3 1.2 15.3 5L16.4 5.6Q19.6 3.9 20.3 5L22.7 8.8Q23.2 10 20 12Q23.2 14 22.7 15.2L20.3 19Q19.6 20.1 16.4 18.4L15.3 19Q15.3 22.8 14 23H10Q8.7 22.8 8.7 19L7.6 18.4Q4.4 20.1 3.7 19L1.3 15.2Q.8 14 4 12Q.8 10 1.3 8.8L3.7 5Q4.4 3.9 7.6 5.6z" />
          </svg>
          <Chevron />
        </button>
      </div>
      <div className="mt-5 flex h-9 items-center border border-[#8a8a8a] bg-white pr-1">
        <input aria-label="Search fields" placeholder="Search" className="flex-1 pl-2 text-[17px] outline-none placeholder:text-[#767676]" />
        <svg width="24" height="24" viewBox="0 0 24 24" fill="none" stroke="#242424" strokeWidth="1.5">
          <circle cx="15" cy="9" r="8" />
          <path d="M9.5 14.5 .7 23.3" />
        </svg>
      </div>
      <div className="mt-[25px] flex h-[99px] justify-between overflow-hidden border border-[#8a8a8a] bg-white">
        <ul className="-mt-3.5 pl-[5px]">
          <FieldCheckbox name="Team" />
          <FieldCheckbox name="Attribute" />
          <FieldCheckbox name="Value" />
          <li className="text-[17px] leading-[33px]">More Tables...</li>
        </ul>
        <div className="flex w-[26px] flex-col items-center bg-[#f5f5f5] py-2">
          <Triangle dir="up" />
          <span className="mt-[19px] h-[26px] w-3 bg-[#6e6e6e]" />
          <Triangle dir="down" className="mt-auto" />
        </div>
      </div>
      <p className="mt-[26px] pl-[5px] text-[17px] leading-8">Drag fields between areas below:</p>
      <div className="mt-[22px] ml-1 grid grid-cols-[241px_1fr]">
        <div className="border-b border-[#a6a6a6] pr-[9px] pb-[9px]">
          <AreaTitle text="Filters" icon={<path d="M0 0H18L11 8V17H7V8z" />} />
          <div className="h-[33px] bg-white" />
        </div>
        <div className="border-b border-l border-[#a6a6a6] pb-[9px] pl-[3px]">
          <AreaTitle text="Columns" icon={<path d="M2 1h4v15H2zM8 1h1v15H8zM11 1h1v15h-1zM14 1h1v15h-1z" />} />
          <AreaField text="Value" />
        </div>
        <div className="pt-[9px] pr-[9px]">
          <AreaTitle text="Rows" icon={<path d="M1 1h15v4H1zM1 7h15v1H1zM1 10h15v1H1zM1 13h15v1H1z" />} />
          <AreaField text="Team" scrolled />
        </div>
        <div className="border-l border-[#a6a6a6] pt-[9px] pl-[3px]">
          <AreaTitle text="Values" icon={<path d="M2 1h13v4h-1Q14 2.5 12 2.5H5.5L10.5 8 5 13.5h7.5Q14 13.5 14.5 11.5h1L15 15H2v-1.500L7.5 8 2 2.5z" />} />
          <AreaField text="Count of Value" />
        </div>
      </div>
      <div className="mt-[29px] flex h-10 items-center pl-2">
        <input id="defer" type="checkbox" className="size-5 appearance-none rounded-sm border-2 border-[#868686] bg-white checked:bg-[#107c41]" />
        <label htmlFor="defer" className="flex-1 pl-2.5 text-[17px]">Defer Layout Update</label>
        <button type="button" disabled className="h-[39px] w-[74px] border border-[#dcdcdc] text-[17px] text-[#bdbdbd]">Update</button>
      </div>
    </div>
  </aside>
);

const StatusBar = () => (
  <footer className="flex h-[18px] shrink-0 items-start justify-between overflow-hidden border-t border-white bg-[#f5f5f5] text-[16px]">
    <div className="flex h-[34px] items-center pl-[13px]">
      <span className="text-[15px]">Ready</span>
      <svg width="22" height="22" viewBox="0 0 22 22" fill="none" stroke="#3b3a39" strokeWidth="1.4" className="ml-7">
        <path d="M20 9V1H1V19H10M1 4.5H20M4 8h6M4 11.5h4" />
        <circle cx="15" cy="14" r="5.5" />
      </svg>
      <svg width="22" height="24" viewBox="0 0 22 24" fill="none" stroke="#3b3a39" strokeWidth="1.4" className="ml-6">
        <circle cx="11" cy="4" r="3" />
        <path d="M8 6.5 3 4.5Q1 4.5 1 6.5L7 10V14L4 20M14 6.5 19 4.5Q21 4.5 21 6.5L15 10M12 14l9 8M21 14l-9 8" />
      </svg>
      <span className="ml-1.5 font-semibold">Accessibility: Investigate</span>
    </div>
    <div className="flex h-[30px] shrink-0 items-center">
      <button type="button" aria-label="Normal view" className="flex h-[30px] w-[60px] items-center justify-center bg-[#e0e0e0]">
        <svg width="20" height="20" viewBox="0 0 20 20" fill="none" stroke="#242424" strokeWidth="1.5"><path d="M1 1h18v18H1zM7 1v18M13 1v18M1 7h18M1 13h18" /></svg>
      </button>
      <button type="button" aria-label="Page layout view" className="ml-5">
        <svg width="21" height="20" viewBox="0 0 21 20" fill="none" stroke="#242424" strokeWidth="1.5"><path d="M1 1h19v18H1zM5 4h11v13H5zM7.5 8h6M7.5 11h6M7.5 14h6" /></svg>
      </button>
      <button type="button" aria-label="Page break view" className="ml-[39px]">
        <svg width="21" height="20" viewBox="0 0 21 20" fill="none" stroke="#242424" strokeWidth="1.5"><path d="M1 1h19v18H1zM7 1v11H1M14 1v11H7" /></svg>
      </button>
      <span className="ml-7 h-px w-[11px] bg-[#242424]" />
      <span className="ml-2.5 flex h-0.5 w-[148px] items-center justify-center bg-[#6e6e6e]">
        <span className="h-4 w-2 shrink-0 bg-[#6e6e6e]" />
      </span>
      <svg width="11" height="11" viewBox="0 0 11 11" stroke="#242424" className="ml-2"><path d="M5.5 0V11M0 5.5H11" /></svg>
      <span className="-mr-5 ml-5">100%</span>
    </div>
  </footer>
);

export default function App() {
  return (
    <div className="flex h-screen flex-col overflow-hidden bg-[#efefef] font-['Noto_Sans',sans-serif] text-[#242424]">
      <TabBar />
      <Ribbon />
      <FormulaBar />
      <main className="flex min-h-0 flex-1">
        <div className="flex min-w-0 flex-1 flex-col">
          <div className="flex min-h-0 flex-1">
            <Sheet />
            <VerticalScrollbar />
          </div>
          <SheetTabs />
        </div>
        <FieldsPane />
      </main>
      <StatusBar />
    </div>
  );
}
